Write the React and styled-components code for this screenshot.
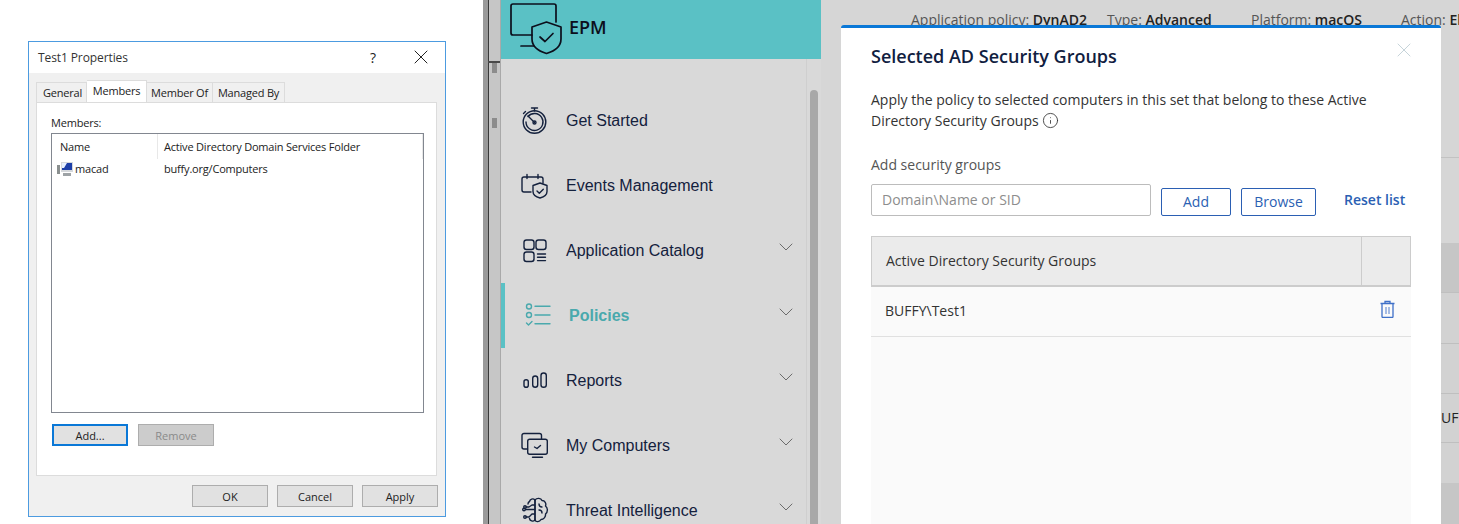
import React from 'react'
import styled, { createGlobalStyle } from 'styled-components'
import { Info, X, ChevronDown } from 'lucide-react'

const GlobalStyle = createGlobalStyle`
  html, body {
    margin: 0;
    padding: 0;
    background: #fff;
  }
  * {
    box-sizing: border-box;
  }
`

const Page = styled.div`
  display: flex;
  width: 1459px;
  height: 524px;
  overflow: hidden;
  background: #fff;
`

/* left side: windows properties dialog */

const LeftPane = styled.div`
  flex: 0 0 483px;
  padding: 41px 0 0 28px;
`

const Dialog = styled.div`
  display: flex;
  flex-direction: column;
  width: 418px;
  height: 476px;
  background: #f0f0f0;
  border: 1px solid #4c9be0;
  font-family: 'Open Sans', sans-serif;
  font-size: 11px;
  letter-spacing: -0.2px;
  color: #222;
`

const TitleBar = styled.div`
  display: flex;
  align-items: center;
  height: 31px;
  padding: 0 12px 0 9px;
  background: #fff;
  font-size: 12px;
  letter-spacing: -0.1px;
  color: #333;
`

const TitleText = styled.span`
  flex: 1;
`

const HelpMark = styled.span`
  margin-right: 33px;
  font-size: 14px;
  color: #222;
`

const TitleClose = styled(X)`
  margin-top: -1px;
  color: #222;
`

const Tabs = styled.div`
  display: flex;
  align-items: flex-end;
  height: 29px;
  padding-left: 7px;
`

const Tab = styled.div`
  display: flex;
  align-items: center;
  justify-content: center;
  width: ${props => props.width}px;
  height: ${props => (props.active ? 22 : 20)}px;
  padding: 0 0 ${props => (props.active ? 3 : 0)}px ${props => (props.first ? 2 : 0)}px;
  background: ${props => (props.active ? '#fff' : '#f0f0f0')};
  border: 1px solid #dcdcdc;
  border-bottom: 0;
  border-left-width: ${props => (props.first ? 1 : 0)}px;
`

const TabPanel = styled.div`
  display: flex;
  flex-direction: column;
  width: 401px;
  height: 374px;
  margin-left: 7px;
  padding: 13px 12px 0 14px;
  background: #fff;
  border: 1px solid #dcdcdc;
`

const ListLabel = styled.div`
  height: 17px;
  line-height: 14px;
`

const ListBox = styled.div`
  width: 373px;
  height: 280px;
  border: 1px solid #828790;
`

const ListHeader = styled.div`
  display: flex;
  height: 25px;
  line-height: 25px;
`

const NameCell = styled.div`
  display: flex;
  align-items: center;
  gap: 2px;
  width: 106px;
  padding-left: ${props => (props.row ? 5 : 8)}px;
  border-right: ${props => (props.row ? 0 : 1)}px solid #e8e8e8;
`

const FolderCell = styled.div`
  flex: 1;
  padding-left: 6px;
  border-right: ${props => (props.row ? 0 : 1)}px solid #e8e8e8;
`

const ListRow = styled.div`
  display: flex;
  height: 20px;
  line-height: 20px;
`

const PanelActions = styled.div`
  display: flex;
  gap: 10px;
  margin-top: 11px;
  padding-left: 1px;
`

const WinButton = styled.button`
  width: 76px;
  height: 22px;
  padding: 0;
  background: ${props => (props.disabled ? '#cccccc' : '#e1e1e1')};
  border: ${props => (props.primary ? '2px solid #0a78d7' : '1px solid #adadad')};
  font: inherit;
  color: ${props => (props.disabled ? '#8a8a8a' : '#222')};
`

const DialogActions = styled.div`
  display: flex;
  justify-content: flex-end;
  gap: 9px;
  margin-top: 9px;
  padding-right: 7px;
`

/* middle: window gutter */

const Gutter = styled.div`
  flex: 0 0 18px;
  background: #c6c6c6;
  border-left: 5px solid #9a9a9a;
  border-right: 1px solid #a9a9a9;
  box-shadow: inset 1px 0 0 #3a3a3a;
`

const GutterLine = styled.div`
  height: 2px;
  margin-top: 61px;
  background: #4a4a4a;
`

const GutterHandle = styled.div`
  width: 5px;
  height: 10px;
  margin: ${props => props.gap}px 0 0 4px;
  background: #8c8c8c;
`

/* sidebar */

const Sidebar = styled.aside`
  display: flex;
  flex-direction: column;
  flex: 0 0 320px;
  background: #d9d9d9;
  font-family: 'Liberation Sans', Arial, sans-serif;
`

const Brand = styled.div`
  display: flex;
  align-items: center;
  flex: 0 0 59px;
  gap: 7px;
  padding: 0 0 3px 9px;
  background: #5ac1c5;
  font-family: 'Open Sans', sans-serif;
  font-size: 18px;
  font-weight: 600;
  color: #0c0f1c;
`

const BrandName = styled.span`
  margin-bottom: 2px;
`

const NavArea = styled.div`
  display: flex;
  flex: 1;
`

const NavList = styled.nav`
  flex: 0 0 306px;
  padding-top: 29px;
  border-right: 1px solid #cfcfcf;
`

const NavItem = styled.div`
  display: flex;
  align-items: center;
  height: 65px;
  padding: 0 8px 0 ${props => (props.active ? 15 : 19)}px;
  border-left: ${props => (props.active ? '4px solid #5ac1c5' : '0')};
  font-size: 16px;
  font-weight: ${props => (props.active ? 700 : 400)};
  color: ${props => (props.active ? '#4aa9ad' : '#14213d')};
`

const NavLabel = styled.span`
  flex: 1;
  margin-left: ${props => (props.active ? 17 : 14)}px;
`

const NavChevron = styled(ChevronDown)`
  margin-top: -8px;
  color: #6c6c6c;
`

const ScrollTrack = styled.div`
  flex: 1;
  padding: 31px 3px 0 3px;
`

const ScrollThumb = styled.div`
  height: 100%;
  background: #a8a8a8;
  border-radius: 4px 4px 0 0;
`

/* right: page behind the modal */

const Content = styled.main`
  position: relative;
  flex: 1;
  padding-left: 20px;
  background: #d6d6d6;
  font-family: 'Open Sans', sans-serif;
  font-size: 14px;
  color: #222;
  overflow: hidden;
`

const Summary = styled.div`
  display: grid;
  grid-template-columns: 196px 144px 150px auto;
  height: 158px;
  padding: 10px 0 0 70px;
  border-bottom: 1px solid #c2c2c2;
  white-space: nowrap;
  color: #555;
`

const SummaryValue = styled.b`
  font-weight: 600;
  color: #222;
`

const BackSpacer = styled.div`
  height: 85px;
`

const BackHeader = styled.div`
  height: 49px;
  background: #c6c6c6;
`

const BackRow = styled.div`
  display: flex;
  align-items: center;
  height: ${props => props.height}px;
  padding: 0 0 ${props => (props.children ? 2 : 0)}px 591px;
  border-top: 1px solid #bfbfbf;
  background: #d2d2d2;
  white-space: nowrap;
`

const BackFooter = styled.div`
  height: 60px;
  background: #c6c6c6;
`

/* modal */

const Modal = styled.section`
  position: absolute;
  top: 25px;
  left: 20px;
  width: 600px;
  height: 520px;
  padding: 0 30px;
  background: #fff;
  border-top: 3px solid #0a78d7;
  border-radius: 3px 3px 0 0;
`

const CloseButton = styled(X)`
  position: absolute;
  top: 10px;
  right: 25px;
  color: #c6d4da;
`

const ModalTitle = styled.h2`
  margin: 15px 0 0;
  font-size: 18px;
  font-weight: 600;
  line-height: 26px;
  color: #10203f;
`

const Description = styled.p`
  margin: 20px 0 0;
  line-height: 21px;
  color: #333;
`

const InfoIcon = styled(Info)`
  margin-left: 3px;
  vertical-align: -3px;
  color: #333;
`

const FieldLabel = styled.div`
  margin-top: 24px;
  line-height: 20px;
  color: #555;
`

const AddRow = styled.div`
  display: flex;
  align-items: flex-end;
  margin-top: 9px;
`

const GroupInput = styled.input`
  width: 280px;
  height: 32px;
  padding: 0 10px 2px;
  border: 1px solid #bcbcbc;
  border-radius: 2px;
  font: inherit;
  &::placeholder {
    color: #8d8d8d;
  }
`

const OutlineButton = styled.button`
  width: ${props => props.width}px;
  height: 28px;
  margin-left: 10px;
  padding: 0 0 2px;
  background: #fff;
  border: 1px solid #2b5fb3;
  border-radius: 2px;
  font: inherit;
  color: #2b5fb3;
`

const ResetLink = styled.a`
  margin: 0 0 7px 28px;
  font-weight: 600;
  color: #2b5fb3;
`

const GroupTable = styled.div`
  height: 300px;
  margin-top: 20px;
  background: #fafafa;
`

const TableHead = styled.div`
  display: flex;
  height: 51px;
  background: #ebebeb;
  border: 1px solid #cccccc;
  border-bottom-width: 2px;
`

const HeadTitle = styled.div`
  display: flex;
  align-items: center;
  flex: 1;
  padding: 0 0 2px 14px;
  color: #333;
`

const HeadAction = styled.div`
  flex: 0 0 49px;
  border-left: 1px solid #cccccc;
`

const TableRow = styled.div`
  display: flex;
  align-items: center;
  justify-content: space-between;
  height: 50px;
  padding: 0 16px 2px 14px;
  border-bottom: 1px solid #e0e0e0;
  color: #333;
`

const line = { fill: 'none', stroke: 'currentColor', strokeWidth: 1.4, strokeLinecap: 'round', strokeLinejoin: 'round' }

const BrandLogo = () => (
  <svg width="52" height="54" viewBox="0 0 52 54" {...line} strokeWidth="1.7">
    <path d="M22 34H3a2 2 0 0 1-2-2V5a2 2 0 0 1 2-2h41a2 2 0 0 1 2 2v16" />
    <path d="M11 45h13" />
    <path d="M36.500 21 51 26v12c0 7-6 12-14.500 14.500C28 50 22 45 22 38V26z" />
    <path d="m30 36 5 4.500 8-8" />
  </svg>
)

const IconBox = styled.svg`
  flex: 0 0 32px;
  width: 32px;
  height: 28px;
`

const StopwatchIcon = () => (
  <IconBox viewBox="0 0 32 28" {...line}>
    <circle cx="14.500" cy="15" r="11.300" />
    <path d="M8 9.500a8.500 8.500 0 1 1-2 5.500" />
    <path d="m8 9 6.500 6.500" />
    <circle cx="14.500" cy="15.500" r="1.500" />
    <path d="M11.500 1h6M14.500 1v3M3.500 6.500l2-2" />
  </IconBox>
)

const CalendarIcon = () => (
  <IconBox viewBox="0 0 32 28" {...line}>
    <path d="M11 20H4a2 2 0 0 1-2-2V7a2 2 0 0 1 2-2h17a2 2 0 0 1 2 2v4" />
    <path d="M7 2.500v4M18 2.500v4" />
    <path d="m20 11 7 2.500v6c0 3-3 5.500-7 6.500-4-1-7-3.500-7-6.500v-6z" />
    <path d="m17 19 2.300 2.300 4-4" />
  </IconBox>
)

const CatalogIcon = () => (
  <IconBox viewBox="0 0 32 28" {...line}>
    <rect x="4" y="3" width="10" height="9.500" rx="2.500" />
    <rect x="16" y="3" width="10" height="9.500" rx="2.500" />
    <rect x="4" y="15" width="10" height="9.500" rx="2.500" />
    <path d="M17.500 17h8M17.500 20.300h8M17.500 23.600h8" />
  </IconBox>
)

const PoliciesIcon = () => (
  <IconBox viewBox="0 0 32 28" {...line}>
    <circle cx="9" cy="4.500" r="2.500" />
    <circle cx="9" cy="13" r="2.500" />
    <path d="m6.500 21 2 2 3.500-3.500" />
    <path d="M15 4.300h15M15 13h15M15 21.700h15" />
  </IconBox>
)

const ReportsIcon = () => (
  <IconBox viewBox="0 0 32 28" {...line}>
    <rect x="4" y="12.700" width="4.300" height="7.600" rx="2.100" />
    <rect x="12.700" y="9" width="5" height="11.300" rx="2.500" />
    <rect x="21" y="6" width="5.300" height="14.300" rx="2.600" />
  </IconBox>
)

const ComputersIcon = () => (
  <IconBox viewBox="0 0 32 28" {...line}>
    <path d="M7.500 17H4a2 2 0 0 1-2-2V3.500a2 2 0 0 1 2-2h15.500a2 2 0 0 1 2 2v3.700" />
    <rect x="7.700" y="7.300" width="19.600" height="15" rx="2" />
    <path d="M12.500 25.200h10" />
    <path d="m14.500 15 2.500 1.500 3.500-3" />
  </IconBox>
)

const ThreatIcon = () => (
  <IconBox viewBox="0 0 32 28" {...line}>
    <path d="M15 3c2-2.500 6-2 7 .5 3 0 4.500 3 3.500 5.500 2.500 2 2.500 6 0 8 .5 3-2 5.500-4.500 5.500-1.500 2.500-5 3-6 .5z" />
    <path d="M15 3c-2-2-5-1-5.500 1.500-1 .5-1.500 1.500-1.500 2.500M15 23c-2 2-5 1-5.500-1.500" />
    <path d="M15 3v20M19 7c0 2 1 3 3 3M19 13c2 0 3 1 3 3M15 12.500H6M15 8h-3l-3 2H6M15 17h-3l-3 3H6" />
    <circle cx="5" cy="10" r="1.300" />
    <circle cx="4" cy="12.500" r="1.300" />
    <circle cx="5" cy="20" r="1.300" />
  </IconBox>
)

const ComputerGlyph = () => (
  <svg width="16" height="16" viewBox="0 0 16 16">
    <rect x="0" y="4" width="3" height="9" fill="#8a8f8f" />
    <rect x="4" y="1" width="12" height="10" fill="#d5d8dc" />
    <rect x="5" y="2" width="10" height="7" fill="#1d3fa8" />
    <path d="M5 2h5l-3 5H5z" fill="#e8f0ff" />
    <rect x="6" y="12" width="8" height="3" fill="#9ea3a6" />
  </svg>
)

const TrashIcon = styled.svg`
  width: 15px;
  height: 18px;
  margin-bottom: 4px;
  color: #3f70c8;
`

const navItems = [
  { label: 'Get Started', Icon: StopwatchIcon },
  { label: 'Events Management', Icon: CalendarIcon },
  { label: 'Application Catalog', Icon: CatalogIcon, more: true },
  { label: 'Policies', Icon: PoliciesIcon, more: true, active: true },
  { label: 'Reports', Icon: ReportsIcon, more: true },
  { label: 'My Computers', Icon: ComputersIcon, more: true },
  { label: 'Threat Intelligence', Icon: ThreatIcon, more: true }
]

const App = () => {
  return (
    <Page>
      <GlobalStyle />
      <LeftPane>
        <Dialog>
          <TitleBar>
            <TitleText>Test1 Properties</TitleText>
            <HelpMark>?</HelpMark>
            <TitleClose size={24} strokeWidth={1} />
          </TitleBar>
          <Tabs>
            <Tab first width={51}>General</Tab>
            <Tab active width={60}>Members</Tab>
            <Tab width={66}>Member Of</Tab>
            <Tab width={72}>Managed By</Tab>
          </Tabs>
          <TabPanel>
            <ListLabel>Members:</ListLabel>
            <ListBox>
              <ListHeader>
                <NameCell>Name</NameCell>
                <FolderCell>Active Directory Domain Services Folder</FolderCell>
              </ListHeader>
              <ListRow>
                <NameCell row><ComputerGlyph />macad</NameCell>
                <FolderCell row>buffy.org/Computers</FolderCell>
              </ListRow>
            </ListBox>
            <PanelActions>
              <WinButton primary>Add...</WinButton>
              <WinButton disabled>Remove</WinButton>
            </PanelActions>
          </TabPanel>
          <DialogActions>
            <WinButton>OK</WinButton>
            <WinButton>Cancel</WinButton>
            <WinButton>Apply</WinButton>
          </DialogActions>
        </Dialog>
      </LeftPane>

      <Gutter>
        <GutterLine />
        <GutterHandle gap={0} />
        <GutterHandle gap={45} />
      </Gutter>

      <Sidebar>
        <Brand>
          <BrandLogo />
          <BrandName>EPM</BrandName>
        </Brand>
        <NavArea>
          <NavList>
            {navItems.map(({ label, Icon, more, active }) => (
              <NavItem key={label} active={active}>
                <Icon />
                <NavLabel active={active}>{label}</NavLabel>
                {more && <NavChevron size={24} strokeWidth={1} />}
              </NavItem>
            ))}
          </NavList>
          <ScrollTrack>
            <ScrollThumb />
          </ScrollTrack>
        </NavArea>
      </Sidebar>

      <Content>
        <Summary>
          <span>Application policy: <SummaryValue>DynAD2</SummaryValue></span>
          <span>Type: <SummaryValue>Advanced</SummaryValue></span>
          <span>Platform: <SummaryValue>macOS</SummaryValue></span>
          <span>Action: <SummaryValue>Elevate</SummaryValue></span>
        </Summary>
        <BackSpacer />
        <BackHeader />
        <BackRow height={51} />
        <BackRow height={50} />
        <BackRow height={49}>BUFFY</BackRow>
        <BackRow height={41} />
        <BackFooter />

        <Modal>
          <CloseButton size={24} strokeWidth={1} />
          <ModalTitle>Selected AD Security Groups</ModalTitle>
          <Description>
            Apply the policy to selected computers in this set that belong to these Active
            Directory Security Groups
            <InfoIcon size={17} strokeWidth={1.2} />
          </Description>
          <FieldLabel>Add security groups</FieldLabel>
          <AddRow>
            <GroupInput placeholder="Domain\Name or SID" />
            <OutlineButton width={70}>Add</OutlineButton>
            <OutlineButton width={75}>Browse</OutlineButton>
            <ResetLink>Reset list</ResetLink>
          </AddRow>
          <GroupTable>
            <TableHead>
              <HeadTitle>Active Directory Security Groups</HeadTitle>
              <HeadAction />
            </TableHead>
            <TableRow>
              BUFFY\Test1
              <TrashIcon viewBox="0 0 15 18" fill="none" stroke="currentColor" strokeWidth="1.300">
                <path d="M.5 3.500h14M5 3.500V1.500h5v2M2 3.500v13a1 1 0 0 0 1 1h9a1 1 0 0 0 1-1v-13" />
                <path d="M6 7v7M9 7v7" strokeWidth=".9" />
              </TrashIcon>
            </TableRow>
          </GroupTable>
        </Modal>
      </Content>
    </Page>
  )
}

export default App
